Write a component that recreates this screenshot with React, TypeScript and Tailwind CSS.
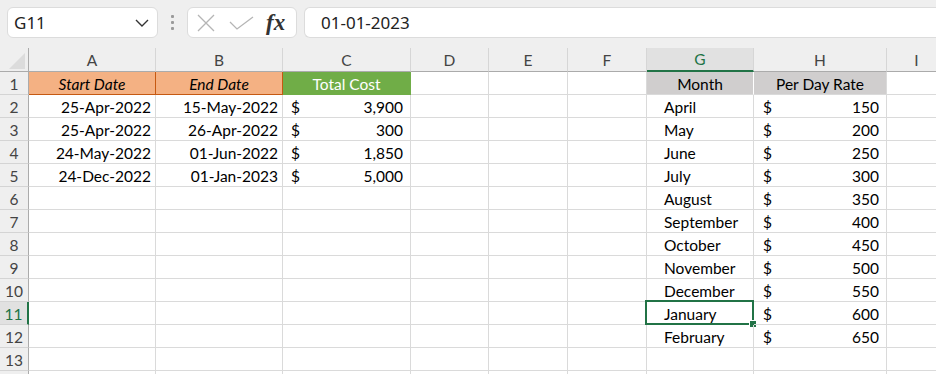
import React from 'react';

const cols = [
  { key: 'A', w: 'w-[127px]' },
  { key: 'B', w: 'w-[127px]' },
  { key: 'C', w: 'w-[128px]' },
  { key: 'D', w: 'w-[78px]' },
  { key: 'E', w: 'w-[79px]' },
  { key: 'F', w: 'w-[79px]' },
  { key: 'G', w: 'w-[107px]' },
  { key: 'H', w: 'w-[133px]' },
  { key: 'I', w: 'w-[60px]' },
];

const startDates = ['25-Apr-2022', '25-Apr-2022', '24-May-2022', '24-Dec-2022'];
const endDates = ['15-May-2022', '26-Apr-2022', '01-Jun-2022', '01-Jan-2023'];
const costs = ['3,900', '300', '1,850', '5,000'];
const months = ['April', 'May', 'June', 'July', 'August', 'September', 'October', 'November', 'December', 'January', 'February'];
const rates = ['150', '200', '250', '300', '350', '400', '450', '500', '550', '600', '650'];

function Money({ value, pl }: { value: string; pl: string }) {
  return (
    <div className={`flex w-full items-center justify-between ${pl} pr-[7px]`}>
      <span>$</span>
      <span>{value}</span>
    </div>
  );
}

function Toolbar() {
  return (
    <div className="flex h-[48px] items-start bg-[#efefef] pt-[7px]">
      <div className="ml-[7px] flex h-[31px] w-[151px] items-center justify-between rounded-[6px] border border-[#dcdcdc] bg-white pl-[6px] pr-[8px]">
        <span className="text-[17px] text-[#222]" style={{ fontFamily: '"Noto Sans", sans-serif' }}>
          G11
        </span>
        <svg width="14" height="8" viewBox="0 0 14 8" fill="none">
          <path d="M1 1l6 6 6-6" stroke="#333" strokeWidth="1.4" />
        </svg>
      </div>
      <div className="ml-[13px] mt-[8px] flex flex-col gap-[3px]">
        <div className="h-[3px] w-[3px] rounded-[1px] bg-[#9a9a9a]" />
        <div className="h-[3px] w-[3px] rounded-[1px] bg-[#9a9a9a]" />
        <div className="h-[3px] w-[3px] rounded-[1px] bg-[#9a9a9a]" />
      </div>
      <div className="ml-[13px] flex h-[31px] w-[110px] items-center rounded-[6px] border border-[#dcdcdc] bg-white pl-[9px]">
        <svg width="18" height="18" viewBox="0 0 18 18" fill="none">
          <path d="M1 1l16 16M17 1L1 17" stroke="#b5b5b5" strokeWidth="1.3" />
        </svg>
        <svg className="ml-[14px]" width="25" height="14" viewBox="0 0 25 14" fill="none">
          <path d="M1 6l7 7L24 1" stroke="#b5b5b5" strokeWidth="1.3" />
        </svg>
        <span
          className="ml-[12px] text-[23px] italic font-bold leading-none text-[#333]"
          style={{ fontFamily: '"Liberation Serif", serif' }}
        >
          fx
        </span>
      </div>
      <div className="ml-[7px] flex h-[31px] flex-1 items-center rounded-l-[6px] border border-r-0 border-[#dcdcdc] bg-white pl-[16px]">
        <span className="text-[17px] text-[#222]" style={{ fontFamily: '"Noto Sans", sans-serif' }}>
          01-01-2023
        </span>
      </div>
    </div>
  );
}

function ColumnHeaders() {
  return (
    <div className="flex h-[24px] bg-[#efefef] text-[15.5px]">
      <div className="relative h-[24px] w-[29px] shrink-0 border-r border-b border-[#ababab]">
        <svg className="absolute left-[9px] top-[5px]" width="16" height="16" viewBox="0 0 16 16">
          <path d="M16 0V16H0Z" fill="#dcdcdc" />
        </svg>
      </div>
      {cols.map((c) =>
        c.key === 'G' ? (
          <div
            key={c.key}
            className={`${c.w} flex h-[24px] shrink-0 items-center justify-center border-r border-r-[#d6d6d6] border-b-2 border-b-[#217346] bg-[#e1e1e1] pt-[2px] text-[#217346]`}
          >
            {c.key}
          </div>
        ) : (
          <div
            key={c.key}
            className={`${c.w} flex h-[24px] shrink-0 items-center justify-center border-r border-r-[#d6d6d6] border-b border-b-[#ababab] pt-[2px] text-[#444]`}
          >
            {c.key}
          </div>
        )
      )}
    </div>
  );
}

function cellContent(col: string, row: number) {
  const i = row - 2;
  if (col === 'A' && row >= 2 && row <= 5) return <div className="w-full pr-[4px] text-right">{startDates[i]}</div>;
  if (col === 'B' && row >= 2 && row <= 5) return <div className="w-full pr-[4px] text-right">{endDates[i]}</div>;
  if (col === 'C' && row >= 2 && row <= 5) return <Money value={costs[i]} pl="pl-[8px]" />;
  if (col === 'G' && row >= 2 && row <= 12) return <div className="w-full pl-[17px]">{months[i]}</div>;
  if (col === 'H' && row >= 2 && row <= 12) return <Money value={rates[i]} pl="pl-[9px]" />;
  return null;
}

function headerCell(col: string) {
  if (col === 'A' || col === 'B') {
    return {
      cls: 'bg-[#f4b183] border-r-[#c65911] border-b-[#c65911] italic justify-center',
      text: col === 'A' ? 'Start Date' : 'End Date',
    };
  }
  if (col === 'C') return { cls: 'bg-[#70ad47] border-r-[#70ad47] border-b-[#70ad47] text-white justify-center', text: 'Total Cost' };
  if (col === 'G') return { cls: 'bg-[#d0cece] border-r-white border-b-[#dadada] justify-center', text: 'Month' };
  if (col === 'H') return { cls: 'bg-[#d0cece] border-r-[#dadada] border-b-[#dadada] justify-center', text: 'Per Day Rate' };
  return { cls: 'border-r-[#dadada] border-b-[#dadada]', text: '' };
}

function Row({ n }: { n: number }) {
  const selected = n === 11;
  const label = n <= 13 ? n : '';
  return (
    <div className="flex h-[23px]">
      {selected ? (
        <div className="flex h-[23px] w-[29px] shrink-0 items-center justify-center border-r-2 border-r-[#217346] border-b border-b-[#d4d4d4] bg-[#e1e1e1] pt-[4px] text-[15.5px] text-[#217346]">
          {label}
        </div>
      ) : (
        <div className="flex h-[23px] w-[29px] shrink-0 items-center justify-center border-r border-r-[#ababab] border-b border-b-[#d4d4d4] bg-[#efefef] pt-[4px] text-[15.5px] text-[#444]">
          {label}
        </div>
      )}
      {cols.map((c) => {
        if (n === 1) {
          const h = headerCell(c.key);
          return (
            <div key={c.key} className={`${c.w} flex h-[23px] shrink-0 items-center border-r border-b pt-[4px] ${h.cls}`}>
              {h.text}
            </div>
          );
        }
        const isSel = selected && c.key === 'G';
        return (
          <div
            key={c.key}
            className={`${c.w} relative flex h-[23px] shrink-0 items-center border-r border-b border-[#dadada] pt-[4px]`}
          >
            {cellContent(c.key, n)}
            {isSel && (
              <div className="absolute -left-[2px] -top-[2px] -right-px -bottom-px border-2 border-[#217346]">
                <div className="absolute -right-[5px] -bottom-[5px] h-[8px] w-[8px] border border-white bg-[#217346]" />
              </div>
            )}
          </div>
        );
      })}
    </div>
  );
}

export default function App() {
  const rows = Array.from({ length: 14 }, (_, i) => i + 1);
  return (
    <div
      className="h-[374px] w-[936px] overflow-hidden bg-white text-[15.5px] text-black"
      style={{ fontFamily: 'Lato, "Liberation Sans", sans-serif' }}
    >
      <Toolbar />
      <ColumnHeaders />
      {rows.map((n) => (
        <Row key={n} n={n} />
      ))}
    </div>
  );
}
